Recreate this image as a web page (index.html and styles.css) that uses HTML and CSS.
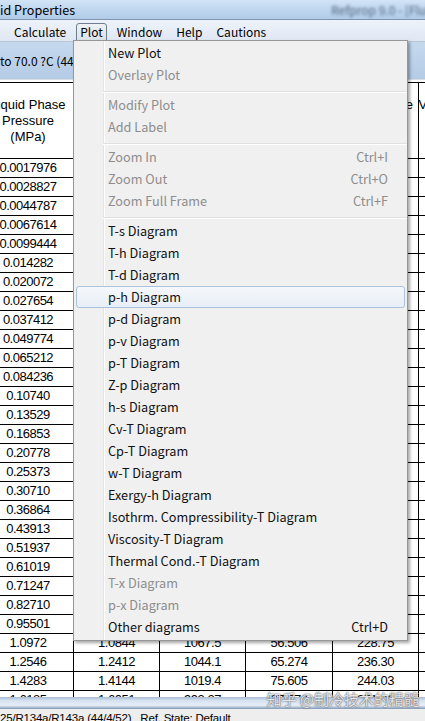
FILE: index.html
```html
<!DOCTYPE html>
<html lang="en">
<head>
    <meta charset="UTF-8">
    <meta name="viewport" content="width=device-width, initial-scale=1.0">
    <title>Fluid Properties</title>
    <link rel="stylesheet" href="styles.css">
</head>
<body>
    <div class="titlebar">
        <span class="title">id Properties</span>
        <span class="title-app">Refprop 9.0 - [Fluid</span>
    </div>

    <div class="menubar">
        <span class="menubar-item">Calculate</span>
        <span class="menubar-item open">Plot</span>
        <span class="menubar-item">Window</span>
        <span class="menubar-item">Help</span>
        <span class="menubar-item">Cautions</span>
    </div>

    <div class="child-caption">to 70.0 ?C (44/4/52)</div>

    <div class="sheet-wrap">
        <div class="sheet">
            <div class="cell head">Liquid Phase<br>Pressure<br>(MPa)</div>
            <div class="cell head">Vapor Phase<br>Pressure<br>(MPa)</div>
            <div class="cell head">Liquid Phase<br>Density<br>(kg/m3)</div>
            <div class="cell head">Vapor Phase<br>Density<br>(kg/m3)</div>
            <div class="cell head">Liquid Phase<br>Enthalpy<br>(kJ/kg)</div>
            <div class="cell head">Vapor Phase<br>Enthalpy<br>(kJ/kg)</div>

            <div class="cell">0.0017976</div><div class="cell"></div><div class="cell"></div><div class="cell"></div><div class="cell"></div><div class="cell"></div>
            <div class="cell">0.0028827</div><div class="cell"></div><div class="cell"></div><div class="cell"></div><div class="cell"></div><div class="cell"></div>
            <div class="cell">0.0044787</div><div class="cell"></div><div class="cell"></div><div class="cell"></div><div class="cell"></div><div class="cell"></div>
            <div class="cell">0.0067614</div><div class="cell"></div><div class="cell"></div><div class="cell"></div><div class="cell"></div><div class="cell"></div>
            <div class="cell">0.0099444</div><div class="cell"></div><div class="cell"></div><div class="cell"></div><div class="cell"></div><div class="cell"></div>
            <div class="cell">0.014282</div><div class="cell"></div><div class="cell"></div><div class="cell"></div><div class="cell"></div><div class="cell"></div>
            <div class="cell">0.020072</div><div class="cell"></div><div class="cell"></div><div class="cell"></div><div class="cell"></div><div class="cell"></div>
            <div class="cell">0.027654</div><div class="cell"></div><div class="cell"></div><div class="cell"></div><div class="cell"></div><div class="cell"></div>
            <div class="cell">0.037412</div><div class="cell"></div><div class="cell"></div><div class="cell"></div><div class="cell"></div><div class="cell"></div>
            <div class="cell">0.049774</div><div class="cell"></div><div class="cell"></div><div class="cell"></div><div class="cell"></div><div class="cell"></div>
            <div class="cell">0.065212</div><div class="cell"></div><div class="cell"></div><div class="cell"></div><div class="cell"></div><div class="cell"></div>
            <div class="cell">0.084236</div><div class="cell"></div><div class="cell"></div><div class="cell"></div><div class="cell"></div><div class="cell"></div>
            <div class="cell">0.10740</div><div class="cell"></div><div class="cell"></div><div class="cell"></div><div class="cell"></div><div class="cell"></div>
            <div class="cell">0.13529</div><div class="cell"></div><div class="cell"></div><div class="cell"></div><div class="cell"></div><div class="cell"></div>
            <div class="cell">0.16853</div><div class="cell"></div><div class="cell"></div><div class="cell"></div><div class="cell"></div><div class="cell"></div>
            <div class="cell">0.20778</div><div class="cell"></div><div class="cell"></div><div class="cell"></div><div class="cell"></div><div class="cell"></div>
            <div class="cell">0.25373</div><div class="cell"></div><div class="cell"></div><div class="cell"></div><div class="cell"></div><div class="cell"></div>
            <div class="cell">0.30710</div><div class="cell"></div><div class="cell"></div><div class="cell"></div><div class="cell"></div><div class="cell"></div>
            <div class="cell">0.36864</div><div class="cell"></div><div class="cell"></div><div class="cell"></div><div class="cell"></div><div class="cell"></div>
            <div class="cell">0.43913</div><div class="cell"></div><div class="cell"></div><div class="cell"></div><div class="cell"></div><div class="cell"></div>
            <div class="cell">0.51937</div><div class="cell"></div><div class="cell"></div><div class="cell"></div><div class="cell"></div><div class="cell"></div>
            <div class="cell">0.61019</div><div class="cell"></div><div class="cell"></div><div class="cell"></div><div class="cell"></div><div class="cell"></div>
            <div class="cell">0.71247</div><div class="cell"></div><div class="cell"></div><div class="cell"></div><div class="cell"></div><div class="cell"></div>
            <div class="cell">0.82710</div><div class="cell"></div><div class="cell"></div><div class="cell"></div><div class="cell"></div><div class="cell"></div>
            <div class="cell">0.95501</div><div class="cell"></div><div class="cell"></div><div class="cell"></div><div class="cell"></div><div class="cell"></div>
            <div class="cell">1.0972</div><div class="cell">1.0844</div><div class="cell">1067.5</div><div class="cell">56.506</div><div class="cell">228.75</div><div class="cell"></div>
            <div class="cell">1.2546</div><div class="cell">1.2412</div><div class="cell">1044.1</div><div class="cell">65.274</div><div class="cell">236.30</div><div class="cell"></div>
            <div class="cell">1.4283</div><div class="cell">1.4144</div><div class="cell">1019.4</div><div class="cell">75.605</div><div class="cell">244.03</div><div class="cell"></div>
            <div class="cell">1.6185</div><div class="cell">1.6051</div><div class="cell">993.27</div><div class="cell">87.576</div><div class="cell">251.96</div><div class="cell"></div>
        </div>
    </div>

    <div class="frame-bottom"></div>
    <div class="statusbar">25/R134a/R143a (44/4/52)&nbsp;&nbsp;&nbsp;Ref. State: Default</div>

    <span class="watermark">知乎 @制冷技术的精髓</span>

    <!-- menu Plot aberto -->
    <div class="popup">
        <div class="pop-item">New Plot</div>
        <div class="pop-item off">Overlay Plot</div>
        <div class="pop-sep"></div>
        <div class="pop-item off">Modify Plot</div>
        <div class="pop-item off">Add Label</div>
        <div class="pop-sep"></div>
        <div class="pop-item off"><span>Zoom In</span><span>Ctrl+I</span></div>
        <div class="pop-item off"><span>Zoom Out</span><span>Ctrl+O</span></div>
        <div class="pop-item off"><span>Zoom Full Frame</span><span>Ctrl+F</span></div>
        <div class="pop-sep"></div>
        <div class="pop-item">T-s Diagram</div>
        <div class="pop-item">T-h Diagram</div>
        <div class="pop-item">T-d Diagram</div>
        <div class="pop-item hot">p-h Diagram</div>
        <div class="pop-item">p-d Diagram</div>
        <div class="pop-item">p-v Diagram</div>
        <div class="pop-item">p-T Diagram</div>
        <div class="pop-item">Z-p Diagram</div>
        <div class="pop-item">h-s Diagram</div>
        <div class="pop-item">Cv-T Diagram</div>
        <div class="pop-item">Cp-T Diagram</div>
        <div class="pop-item">w-T Diagram</div>
        <div class="pop-item">Exergy-h Diagram</div>
        <div class="pop-item">Isothrm. Compressibility-T Diagram</div>
        <div class="pop-item">Viscosity-T Diagram</div>
        <div class="pop-item">Thermal Cond.-T Diagram</div>
        <div class="pop-item off">T-x Diagram</div>
        <div class="pop-item off">p-x Diagram</div>
        <div class="pop-item"><span>Other diagrams</span><span>Ctrl+D</span></div>
    </div>
</body>
</html>
```

FILE: styles.css
```css
    * {
        box-sizing: border-box;
    }

    body {
        margin: 0;
        width: 425px;
        height: 721px;
        overflow: hidden;
        position: relative;
        background-color: #f0f0f0;
        font-family: "Noto Sans CJK SC", "Noto Sans", sans-serif;
        font-size: 12px;
        color: #000;
    }

    .titlebar {
        height: 20px;
        display: flex;
        align-items: center;
        justify-content: space-between;
        white-space: nowrap;
        overflow: hidden;
        background: linear-gradient(#d2e4f6, #bdd5ee 55%, #b1cbe8);
        border-bottom: 1px solid #8094ad;
    }

    .title {
        font-size: 12.6px;
        line-height: 19px;
    }

    .title-app {
        color: #55677f;
        font-size: 12px;
        filter: blur(1.4px);
        margin-right: -12px;
    }

    .menubar {
        height: 21px;
        display: flex;
        align-items: flex-end;
        padding-left: 10px;
        background: linear-gradient(#eef3fa, #dfe7f3);
    }

    .menubar-item {
        height: 18px;
        line-height: 16px;
        padding: 0 3px;
        margin-right: 6px;
        border: 1px solid transparent;
        border-bottom: none;
    }

    .menubar-item.open {
        border: 1px solid #6f7d90;
        border-radius: 3px 3px 0 0;
        background: linear-gradient(#eef1f5, #dde3ea);
    }

    .child-caption {
        height: 39px;
        line-height: 38px;
        font-size: 12px;
        white-space: nowrap;
        overflow: hidden;
        background: linear-gradient(#c6d9ee, #b4cbe6);
        border-top: 1px solid #b7c4d4;
        border-bottom: 1px solid #d9dde2;
    }

    .sheet-wrap {
        height: 617px;
        padding-top: 2px;
        overflow: hidden;
        background-color: #fff;
    }

    .sheet {
        display: grid;
        grid-template-columns: 91px 86px 86px 87px 86px 74px;
        margin-left: -17px;
        width: 510px;
        border-top: 1px solid #000;
    }

    .cell {
        height: 19px;
        line-height: 18px;
        border-right: 1px solid #000;
        border-bottom: 1px solid #000;
        text-align: center;
        white-space: nowrap;
        font-family: "Liberation Sans", Arial, sans-serif;
        font-size: 13px;
        letter-spacing: -0.5px;
    }

    .cell.head {
        height: 76px;
        line-height: 16px;
        letter-spacing: 0;
        display: flex;
        align-items: center;
        justify-content: center;
    }

    .frame-bottom {
        height: 12px;
        background: linear-gradient(#a9bcd4, #d6e2f0 30%, #e6edf6 70%, #7f98b8);
    }

    .statusbar {
        height: 20px;
        padding-top: 3px;
        white-space: nowrap;
        font-family: "Liberation Sans", Arial, sans-serif;
        font-size: 11.5px;
        letter-spacing: -0.2px;
        background-color: #eeeeee;
    }

    .watermark {
        position: absolute;
        right: 6px;
        top: 690px;
        font-size: 15px;
        line-height: 18px;
        color: rgba(255, 255, 255, 0.85);
        text-shadow: 0 0 1px #4a4a4a, 0 0 2px #777;
    }

    /* menu suspenso */
    .popup {
        position: absolute;
        left: 73px;
        top: 40px;
        width: 335px;
        padding: 1px 0 2px;
        border: 1px solid #979797;
        background: linear-gradient(to right, #f0f0f0 29px, #e2e3e3 29px, #e2e3e3 30px, #fff 30px, #fff 31px, #f0f0f0 31px);
        box-shadow: 2px 2px 3px rgba(0, 0, 0, 0.35);
        font-size: 12.7px;
    }

    .pop-item {
        height: 22px;
        line-height: 20px;
        margin: 0 2px;
        padding: 0 16px 0 31px;
        border: 1px solid transparent;
        border-radius: 3px;
        display: flex;
        justify-content: space-between;
        white-space: nowrap;
        color: #111;
    }

    .pop-item.off {
        color: #8d8d8d;
    }

    .pop-item.hot {
        border-color: #aac2de;
        background: linear-gradient(#f4f7fb, #e9eff7);
    }

    .pop-sep {
        height: 2px;
        margin: 5px 0 1px 29px;
        border-top: 1px solid #e0e0e0;
        border-bottom: 1px solid #fff;
    }
```
